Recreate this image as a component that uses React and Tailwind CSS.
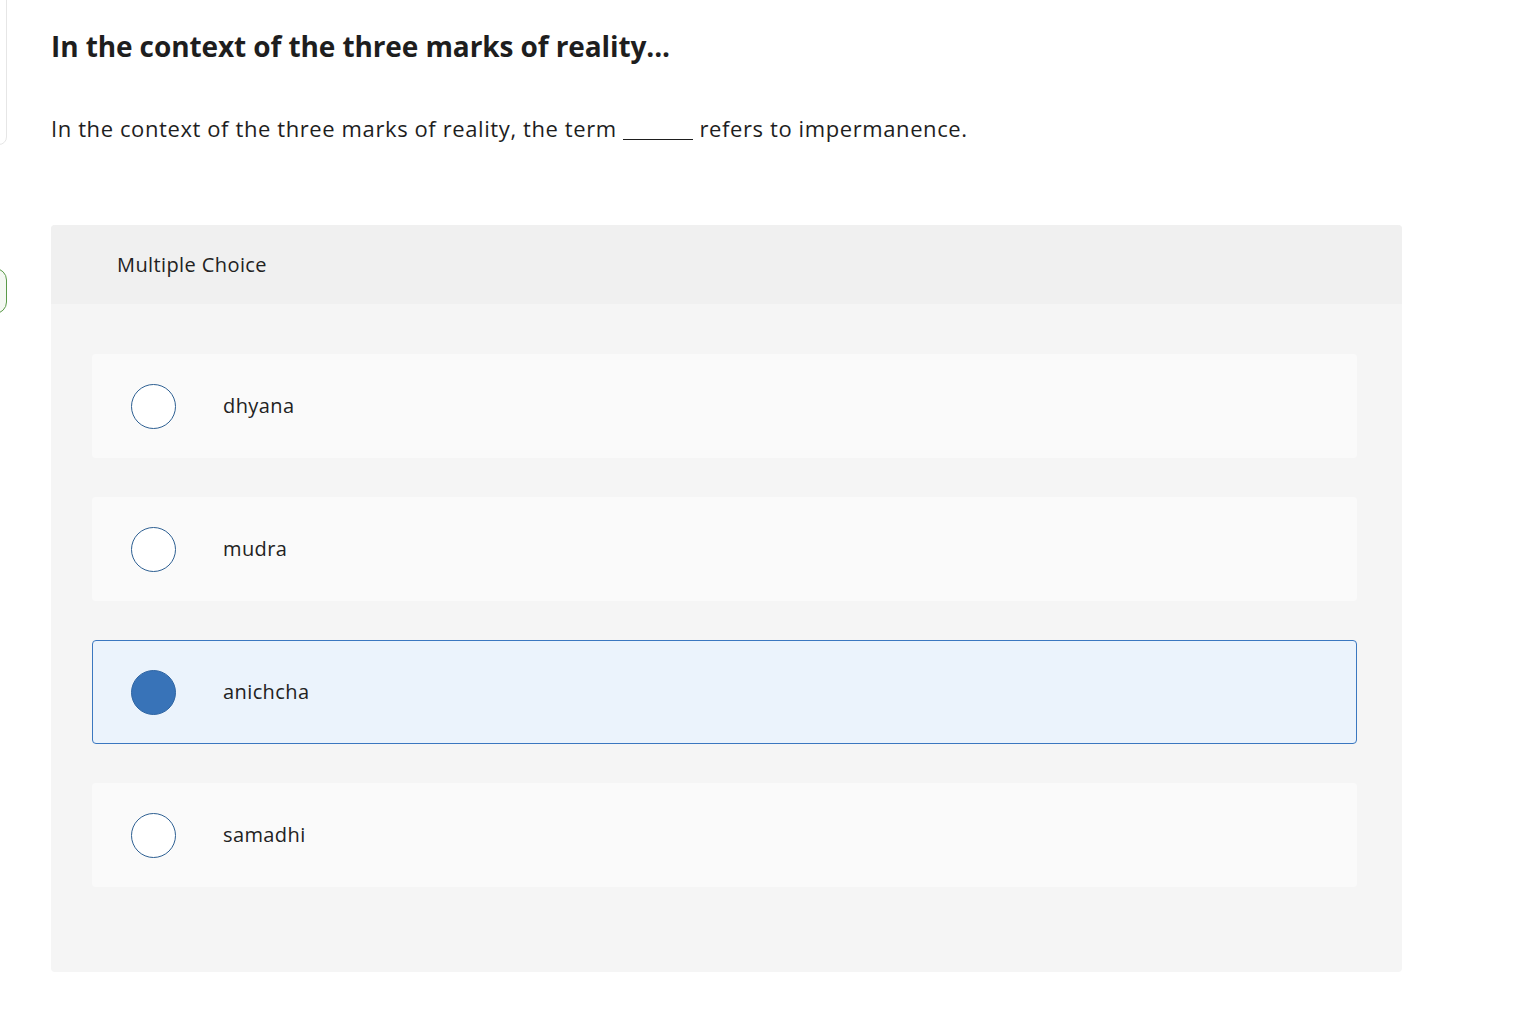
// Multiple choice question screen

const OPTIONS = [
  { id: 'a', label: 'dhyana' },
  { id: 'b', label: 'mudra' },
  { id: 'c', label: 'anichcha', selected: true },
  { id: 'd', label: 'samadhi' },
];

function Option({ label, selected }) {
  return (
    <div
      className={`flex items-center h-[104px] rounded-[4px] border ${
        selected ? 'bg-[#ebf3fc] border-[#3a77c0]' : 'bg-[#fafafa] border-transparent'
      }`}
    >
      <span
        className={`ml-[38px] w-[45px] h-[45px] rounded-full border shrink-0 ${
          selected ? 'bg-[#3873b8] border-[#2f65a3]' : 'bg-white border-[#2d5f92]'
        }`}
      />
      <span className="ml-[47px] text-[20px] tracking-[0.4px] text-[#222]">{label}</span>
    </div>
  );
}

export default function App() {
  return (
    <div className="relative min-h-[1024px] bg-white text-[#1a1a1a]" style={{ fontFamily: '"Open Sans", Lato, sans-serif' }}>
      {/* cut-off elements on the left edge */}
      <div className="absolute left-[-20px] top-[-10px] w-[27px] h-[155px] rounded-[8px] border border-[#e6e6e6]" />
      <div className="absolute left-[-20px] top-[268px] w-[27px] h-[46px] rounded-[12px] border border-[#5a9a48] bg-[#f4f8f2]" />

      <div className="pl-[51px] pt-[28px]">
        <h1 className="text-[28px] font-bold tracking-[-0.1px] leading-[36px] text-[#1e1e1e]">
          In the context of the three marks of reality...
        </h1>
        <p className="mt-[50px] text-[22px] tracking-[0.6px] leading-[28px] text-[#1e1e1e]">
          In the context of the three marks of reality, the term{' '}
          <span className="inline-block w-[70px] h-[1px] align-[-3px] border-b-[1.5px] border-[#1e1e1e]" aria-label="blank" />{' '}
          refers to impermanence.
        </p>

        <div className="mt-[83px] w-[1351px] rounded-[4px] bg-[#f5f5f5] overflow-hidden">
          <div className="h-[79px] bg-[#f0f0f0] flex items-center pl-[66px]">
            <span className="text-[20px] tracking-[0.4px] text-[#222]">Multiple Choice</span>
          </div>
          <div className="pt-[50px] pb-[85px] pl-[41px] pr-[45px] flex flex-col gap-[39px]">
            {OPTIONS.map(o => (
              <Option key={o.id} label={o.label} selected={o.selected} />
            ))}
          </div>
        </div>
      </div>
    </div>
  );
}
